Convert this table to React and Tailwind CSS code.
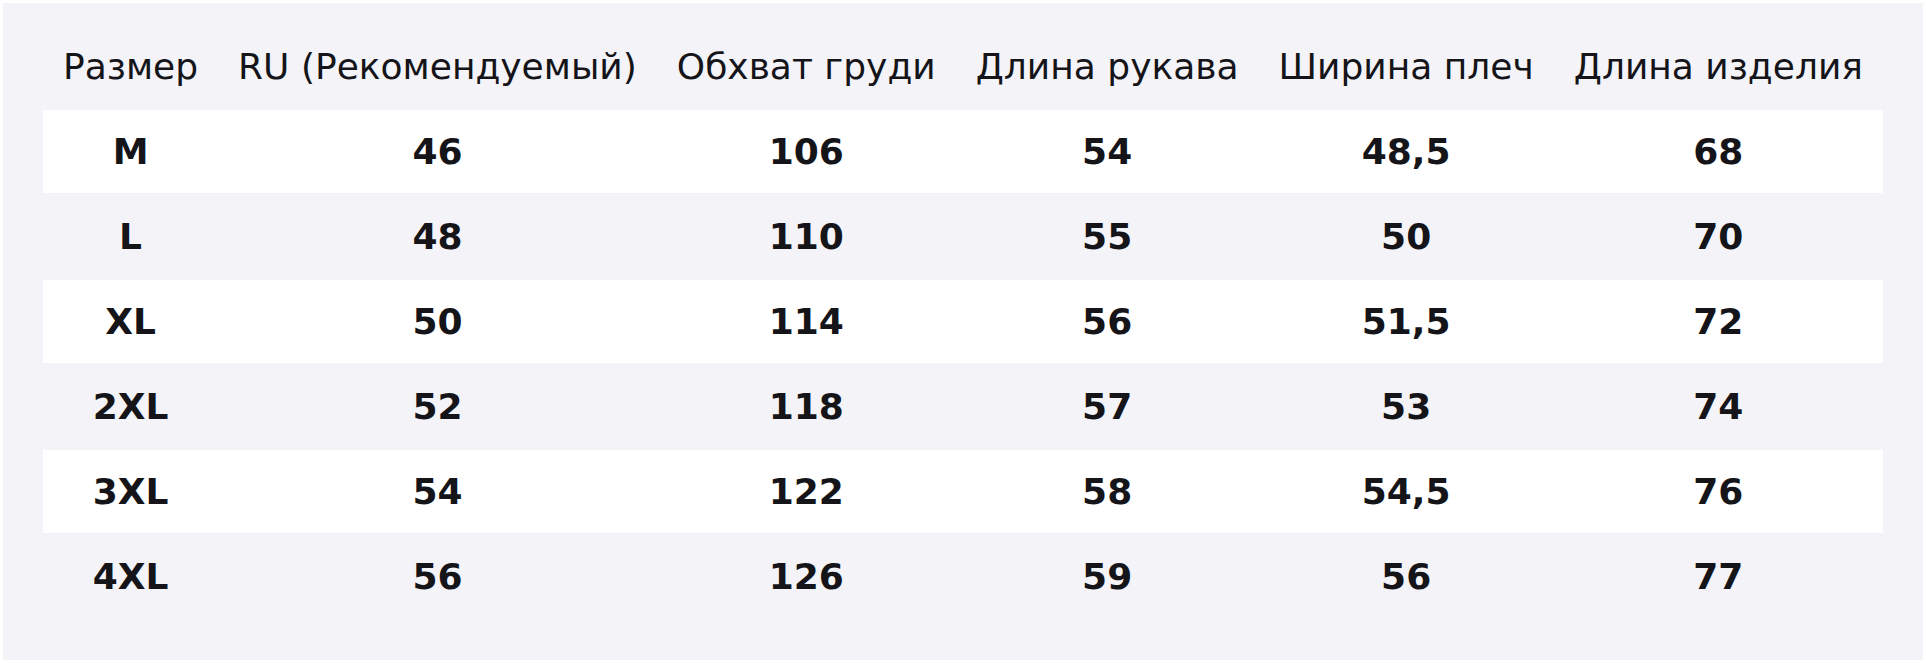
import React from 'react';

const headers = ['Размер', 'RU (Рекомендуемый)', 'Обхват груди', 'Длина рукава', 'Ширина плеч', 'Длина изделия'];

const rows = [
  ['M', '46', '106', '54', '48,5', '68'],
  ['L', '48', '110', '55', '50', '70'],
  ['XL', '50', '114', '56', '51,5', '72'],
  ['2XL', '52', '118', '57', '53', '74'],
  ['3XL', '54', '122', '58', '54,5', '76'],
  ['4XL', '56', '126', '59', '56', '77'],
];

const App = () => {
  return (
    <div className="bg-white p-[3px] w-[1926px]">
      <div
        className="bg-[#f3f3f8] px-[40px] pt-[40px] pb-[40px] text-[#141419]"
        style={{ fontFamily: '"DejaVu Sans", Verdana, sans-serif' }}
      >
        <table className="w-full border-collapse text-[36px] table-auto">
          <thead>
            <tr className="h-[67px]">
              {headers.map((h) => (
                <th
                  key={h}
                  className="px-[20px] pt-0 pb-[22px] font-normal text-center whitespace-nowrap align-bottom leading-[42px]"
                >
                  {h}
                </th>
              ))}
            </tr>
          </thead>
          <tbody>
            {rows.map((row, i) => (
              <tr key={row[0]} className={i % 2 === 0 ? 'bg-white h-[83px]' : 'h-[87px]'}>
                {row.map((cell, j) => (
                  <td key={j} className="px-[20px] py-0 text-center font-bold align-middle leading-[42px]">
                    {cell}
                  </td>
                ))}
              </tr>
            ))}
          </tbody>
        </table>
      </div>
    </div>
  );
};

export default App;
